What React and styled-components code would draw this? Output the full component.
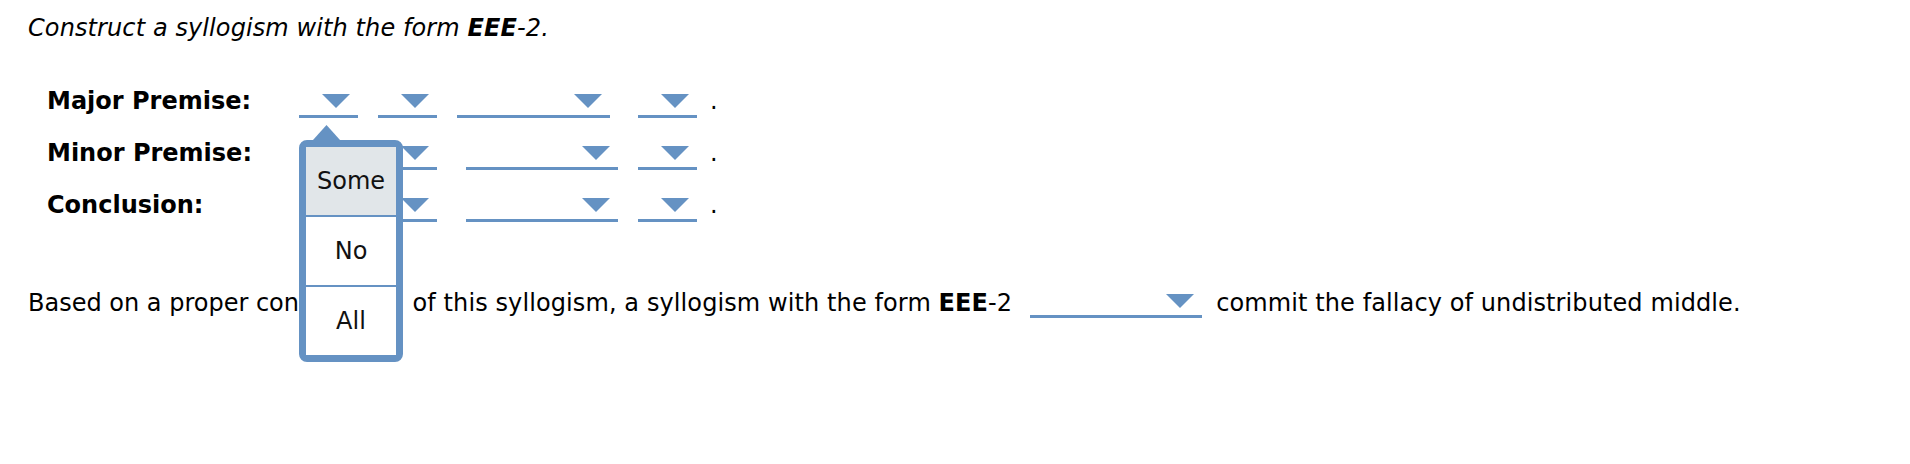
import React from 'react';
import styled, { createGlobalStyle } from 'styled-components';

const BLUE = '#6592c3';

const GlobalStyle = createGlobalStyle`
  body {
    margin: 0;
    background: #ffffff;
    color: #000000;
    font-family: 'DejaVu Sans', Verdana, sans-serif;
    font-size: 24px;
  }
`;

const Page = styled.div`
  position: relative;
  box-sizing: border-box;
  min-height: 464px;
  padding: 14px 0 0 28px;
`;

const Title = styled.p`
  margin: 0;
  line-height: 28px;
  font-style: italic;
  letter-spacing: 0.1px;
`;

const Rows = styled.div`
  display: flex;
  flex-direction: column;
  gap: 21px;
  margin: 45px 0 0 19px;
`;

const Row = styled.div`
  display: flex;
  align-items: flex-end;
`;

const Label = styled.div`
  width: 252px;
  flex-shrink: 0;
  font-weight: bold;
  line-height: 28px;
  padding-bottom: 3px;
`;

const Dot = styled.span`
  line-height: 28px;
  padding-bottom: 3px;
`;

const SelectBox = styled.span`
  position: relative;
  display: inline-flex;
  justify-content: flex-end;
  align-items: flex-start;
  box-sizing: border-box;
  flex-shrink: 0;
  width: ${(p) => p.$w}px;
  height: 24px;
  padding-right: 8px;
  margin-right: ${(p) => p.$mr || 0}px;
  margin-left: ${(p) => p.$ml || 0}px;
  border-bottom: 3px solid ${BLUE};
  vertical-align: ${(p) => (p.$inline ? '3px' : 'baseline')};
`;

const Popup = styled.div`
  position: absolute;
  top: 46px;
  left: 0;
  z-index: 10;
  width: 104px;
  box-sizing: border-box;
  border: 7px solid ${BLUE};
  border-radius: 8px;
  background: #ffffff;
  letter-spacing: 0;
`;

const Caret = styled.svg`
  position: absolute;
  top: -22px;
  left: 7px;
`;

const Option = styled.div`
  height: 68px;
  display: flex;
  align-items: center;
  justify-content: center;
  color: #111111;
  background: ${(p) => (p.$active ? '#e1e6e9' : '#ffffff')};
  border-top: ${(p) => (p.$first ? 'none' : `2px solid ${BLUE}`)};
`;

const Sentence = styled.p`
  margin: 67px 0 0 0;
  line-height: 28px;
  letter-spacing: 0.1px;
`;

const Tight = styled.span`
  letter-spacing: 0;
`;

/* the part of the word that lies under the open menu */
const Covered = styled.span`
  letter-spacing: -0.6px;
  padding-right: 5px;
`;

const Arrow = () => (
  <svg width="28" height="14" viewBox="0 0 28 14">
    <polygon points="0,0 28,0 14,14" fill={BLUE} />
  </svg>
);

const Select = ({ w, mr, ml, inline, children }) => (
  <SelectBox $w={w} $mr={mr} $ml={ml} $inline={inline}>
    <Arrow />
    {children}
  </SelectBox>
);

const OpenMenu = () => (
  <Popup>
    <Caret width="27" height="15" viewBox="0 0 27 15">
      <polygon points="0,15 13.5,0 27,15" fill={BLUE} />
    </Caret>
    <Option $first $active>Some</Option>
    <Option>No</Option>
    <Option>All</Option>
  </Popup>
);

const layoutFirst = [
  { w: 59, mr: 20 },
  { w: 59, mr: 20 },
  { w: 153, mr: 28 },
  { w: 59, mr: 13 },
];

const layoutOther = [
  { w: 59, mr: 20 },
  { w: 59, mr: 29 },
  { w: 152, mr: 20 },
  { w: 59, mr: 13 },
];

const premises = [
  { label: 'Major Premise:', cells: layoutFirst, open: true },
  { label: 'Minor Premise:', cells: layoutOther },
  { label: 'Conclusion:', cells: layoutOther },
];

const App = () => {
  return (
    <Page>
      <GlobalStyle />
      <Title>
        Construct a syllogism with the form <b>EEE</b>-2.
      </Title>
      <Rows>
        {premises.map((row) => (
          <Row key={row.label}>
            <Label>{row.label}</Label>
            {row.cells.map((c, i) => (
              <Select key={i} w={c.w} mr={c.mr}>
                {row.open && i === 0 ? <OpenMenu /> : null}
              </Select>
            ))}
            <Dot>.</Dot>
          </Row>
        ))}
      </Rows>
      <Sentence>
        <Tight>Based on a proper con</Tight>
        <Covered>struction</Covered>{' '}
        of this syllogism, a syllogism with the form <b>EEE</b>-2
        <Select w={172} ml={18} mr={14} inline />
        commit the fallacy of undistributed middle.
      </Sentence>
    </Page>
  );
};

export default App;
